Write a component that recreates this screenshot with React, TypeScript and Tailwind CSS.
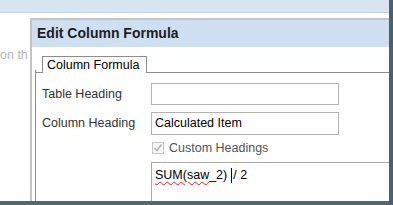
export default function App() {
    return (
        <div
            className="relative w-[393px] h-[205px] overflow-hidden bg-white flex flex-col"
            style={{fontFamily: '"Liberation Sans", Arial, sans-serif'}}
        >
            <div className="h-[13px] bg-[#d8e4f0] border-b border-[#c3d4ea]" />
            <div className="flex-1 flex">
                <div className="flex-1 pt-[33px] text-[12.5px] text-[#b4b4b4]">on th</div>
            </div>
            <div className="h-[4px] bg-[#4d6872]" />

            {/* right dark edge */}
            <div className="absolute right-0 top-0 bottom-0 w-[4px] bg-[#466170]" />

            {/* dialog */}
            <div className="absolute left-[30px] top-[18px] right-[4px] bottom-[4px] bg-white border-l-2 border-t-2 border-[#c4c4c4] flex flex-col">
                <div className="h-[27px] bg-[#cddff1] flex items-center pl-[5px] text-[14px] font-bold text-[#1e1e1e]">
                    Edit Column Formula
                </div>
                <div className="flex-1 flex flex-col pl-[3px] pt-[9px]">
                    <div className="flex items-end h-[17px]">
                        <div className="w-[7px] h-[3px] border-l border-b border-[#8c8c8c] self-end" />
                        <div className="h-[17px] w-[105px] border border-b-0 border-[#8c8c8c] bg-white flex items-center pl-[4px] text-[12.5px] text-black">
                            Column Formula
                        </div>
                        <div className="flex-1 border-b border-[#8c8c8c]" />
                    </div>
                    <div className="flex-1 border-l border-[#8c8c8c] pl-[6px] pt-[10px] flex flex-col">
                        <div className="grid grid-cols-[109px_188px] gap-y-[7px] items-center text-[12.5px]">
                            <span className="text-[#333]">Table Heading</span>
                            <div className="h-[22px] border border-[#b4b4b4] bg-white" />
                            <span className="text-[#333]">Column Heading</span>
                            <div className="h-[23px] border border-[#b4b4b4] bg-white flex items-center pl-[3px] text-black">
                                Calculated Item
                            </div>
                        </div>
                        <div className="flex items-center gap-[5px] pl-[110px] mt-[7px] h-[12px]">
                            <div className="w-[12px] h-[12px] border border-[#c8c8c8] bg-[#f6f6f6] flex items-center justify-center">
                                <svg width="10" height="10" viewBox="0 0 10 10">
                                    <path d="M1.5 5 L4 7.5 L8.5 1.5" stroke="#b2b2b2" strokeWidth="1.6" fill="none" />
                                </svg>
                            </div>
                            <span className="text-[12.5px] text-[#555]">Custom Headings</span>
                        </div>
                        <div className="mt-[8px] ml-[109px] flex-1 border-l border-t border-[#a8a8a8] pl-[3px] pt-[5px] text-[12.5px] text-black leading-[14px]">
                            <span className="underline decoration-wavy decoration-[#e02020] decoration-1 underline-offset-2">SUM(saw</span>
                            <span>_2)</span>
                            <span className="inline-block w-px h-[15px] bg-black align-middle ml-[4px] mr-[1px]" />
                            <span>/ 2</span>
                        </div>
                    </div>
                </div>
            </div>
        </div>
    );
}
